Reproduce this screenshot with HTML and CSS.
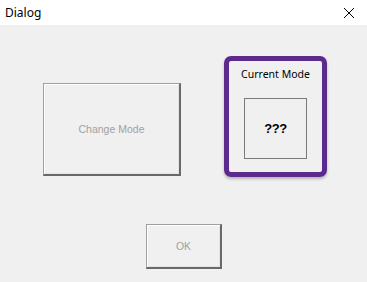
FILE: index.html
```html
<!DOCTYPE html>
<html>
<head>
<meta charset="utf-8">
<link rel="stylesheet" href="styles.css">
</head>
<body>
<div class="window">
  <div class="titlebar">
    <span class="title">Dialog</span>
    <svg class="close" width="12" height="12" viewBox="0 0 12 12"><path d="M1 1L11 11M11 1L1 11" stroke="#000" stroke-width="1" fill="none"/></svg>
  </div>
  <div class="client">
    <div class="row">
      <div class="btn big">Change Mode</div>
      <div class="mode">
        <div class="mode-label">Current Mode</div>
        <div class="mode-box">???</div>
      </div>
    </div>
    <div class="footer">
      <div class="btn ok">OK</div>
    </div>
  </div>
</div>
</body>
</html>
```
FILE: styles.css
```css
html, body {
  margin: 0;
  padding: 0;
  background: #f0f0f0;
}
.window {
  width: 367px;
  height: 282px;
  display: flex;
  flex-direction: column;
  font-family: "Liberation Sans", Arial, sans-serif;
}
.titlebar {
  height: 25px;
  background: #ffffff;
  display: flex;
  align-items: center;
  justify-content: space-between;
  padding: 0 12px 0 5px;
  box-sizing: border-box;
}
.title {
  font-family: "Noto Sans", sans-serif;
  font-size: 12px;
  color: #000;
  margin-top: -1px;
}
.close {
  display: block;
  margin-top: 1px;
}
.client {
  flex: 1;
  display: flex;
  flex-direction: column;
}
.row {
  display: flex;
  align-items: flex-start;
  padding-left: 43px;
}
.btn {
  box-sizing: border-box;
  display: flex;
  align-items: center;
  justify-content: center;
  color: #a0a0a0;
  font-size: 10.5px;
  background: #f0f0f0;
  border-top: 1px solid #a0a0a0;
  border-left: 1px solid #a0a0a0;
  border-right: 2px solid #696969;
  border-bottom: 2px solid #696969;
  box-shadow: inset 1px 1px 0 #ffffff, inset -1px -1px 0 #e3e3e3;
}
.big {
  width: 138px;
  height: 93px;
  margin-top: 58px;
}
.mode {
  box-sizing: border-box;
  width: 103px;
  height: 121px;
  margin-left: 43px;
  margin-top: 31px;
  border: 5px solid #5b2a8c;
  border-radius: 7px;
  box-shadow: 0 2px 3px rgba(0,0,0,0.25);
  display: flex;
  flex-direction: column;
  align-items: center;
}
.mode-label {
  font-family: "Noto Sans", sans-serif;
  font-size: 10.5px;
  color: #000;
  margin-top: 6px;
  line-height: 14px;
}
.mode-box {
  box-sizing: border-box;
  width: 63px;
  height: 61px;
  margin-top: 17px;
  border: 1px solid #7a7a7a;
  display: flex;
  align-items: center;
  justify-content: center;
  font-weight: bold;
  font-size: 13px;
  letter-spacing: -0.5px;
  color: #000;
}
.footer {
  display: flex;
  justify-content: center;
  padding-left: 1px;
  margin-top: 47px;
}
.ok {
  width: 76px;
  height: 45px;
}
```
